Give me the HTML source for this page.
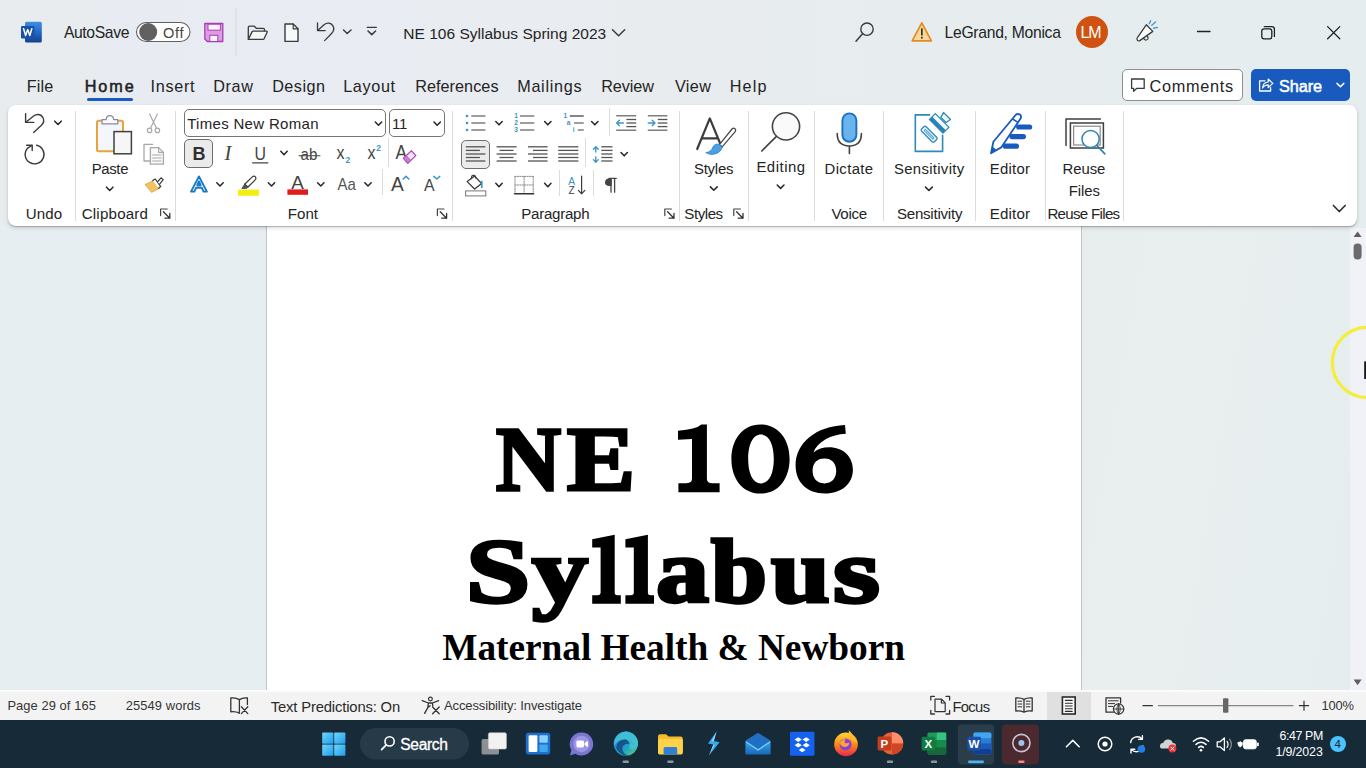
<!DOCTYPE html>
<html><head><meta charset="utf-8"><title>Word</title>
<style>
html,body{margin:0;padding:0;}
body{width:1366px;height:768px;overflow:hidden;position:relative;font-family:"Liberation Sans",sans-serif;background:#e8edf2;}
div,svg{box-sizing:border-box;}
svg{overflow:visible;}
</style></head><body>
<div style="position:absolute;left:0px;top:0px;width:1366px;height:226px;background:linear-gradient(90deg,#e8ecee 0%,#e8ecee 6.5%,#e8ebf2 8%,#e9ecf1 38%,#e8ecee 50%,#e5edee 100%);"></div>
<div style="position:absolute;left:0px;top:226px;width:1366px;height:464px;background:linear-gradient(100deg,#e6eef1 0%,#e6eef1 20%,#e8eeee 79%,#e9eeee 84%,#e4edef 100%);"></div>
<div style="position:absolute;left:1350px;top:228px;width:16px;height:462px;background:#f0f2f7;"></div>
<div style="position:absolute;left:266px;top:226px;width:816px;height:464px;background:#fff;border-left:1px solid #c2c2c9;border-right:1px solid #c2c2c9;"></div>
<div style="position:absolute;left:8px;top:105px;width:1349px;height:121px;background:#fff;border-radius:8px;box-shadow:0 1px 1px rgba(0,0,0,0.22),0 2px 4px rgba(0,0,0,0.14);"></div>
<div style="position:absolute;left:0px;top:690px;width:1366px;height:30px;background:#f3f3f3;border-top:2px solid #fbfbfb;"></div>
<div style="position:absolute;left:0px;top:720px;width:1366px;height:48px;background:#172a38;"></div>
<svg style="position:absolute;left:0;top:0" width="1366" height="64" viewBox="0 0 1366 64"><rect x="136.5" y="22.5" width="53.5" height="19" rx="9.5" fill="#fff" stroke="#616161" stroke-width="1.1"/><circle cx="148.2" cy="32" r="9" fill="#606060"/></svg>
<div style="position:absolute;left:63.90px;top:24.65px;font-family:'Liberation Sans',sans-serif;font-size:15.7px;line-height:1;white-space:pre;color:#242424;letter-spacing:-0.362px;">AutoSave</div>
<div style="position:absolute;left:163.11px;top:25.70px;font-family:'Liberation Sans',sans-serif;font-size:14.6px;line-height:1;white-space:pre;color:#444;letter-spacing:0.619px;">Off</div>
<div style="position:absolute;left:403.25px;top:25.75px;font-family:'Liberation Sans',sans-serif;font-size:15.5px;line-height:1;white-space:pre;color:#242424;letter-spacing:0.018px;">NE 106 Syllabus Spring 2023</div>
<div style="position:absolute;left:944.55px;top:24.65px;font-family:'Liberation Sans',sans-serif;font-size:15.7px;line-height:1;white-space:pre;color:#242424;letter-spacing:-0.285px;">LeGrand, Monica</div>
<div style="position:absolute;left:1076px;top:16px;width:32px;height:32px;background:#cf5210;border-radius:50%;"></div>
<div style="position:absolute;left:1080.59px;top:24.50px;font-family:'Liberation Sans',sans-serif;font-size:16px;line-height:1;white-space:pre;color:#fff;letter-spacing:-1.325px;">LM</div>
<div style="position:absolute;left:26.69px;top:77.90px;font-family:'Liberation Sans',sans-serif;font-size:16.2px;line-height:1;white-space:pre;color:#242424;letter-spacing:0.146px;">File</div>
<div style="position:absolute;left:84.69px;top:77.90px;font-family:'Liberation Sans',sans-serif;font-size:16.2px;line-height:1;white-space:pre;color:#1f1f1f;letter-spacing:1.938px;-webkit-text-stroke:0.55px #1f1f1f;">Home</div>
<div style="position:absolute;left:150.56px;top:77.90px;font-family:'Liberation Sans',sans-serif;font-size:16.2px;line-height:1;white-space:pre;color:#242424;letter-spacing:0.700px;">Insert</div>
<div style="position:absolute;left:213.19px;top:77.90px;font-family:'Liberation Sans',sans-serif;font-size:16.2px;line-height:1;white-space:pre;color:#242424;letter-spacing:0.646px;">Draw</div>
<div style="position:absolute;left:272.19px;top:77.90px;font-family:'Liberation Sans',sans-serif;font-size:16.2px;line-height:1;white-space:pre;color:#242424;letter-spacing:0.475px;">Design</div>
<div style="position:absolute;left:343.19px;top:77.90px;font-family:'Liberation Sans',sans-serif;font-size:16.2px;line-height:1;white-space:pre;color:#242424;letter-spacing:0.650px;">Layout</div>
<div style="position:absolute;left:415.19px;top:77.90px;font-family:'Liberation Sans',sans-serif;font-size:16.2px;line-height:1;white-space:pre;color:#242424;letter-spacing:0.056px;">References</div>
<div style="position:absolute;left:517.19px;top:77.90px;font-family:'Liberation Sans',sans-serif;font-size:16.2px;line-height:1;white-space:pre;color:#242424;letter-spacing:0.705px;">Mailings</div>
<div style="position:absolute;left:601.19px;top:77.90px;font-family:'Liberation Sans',sans-serif;font-size:16.2px;line-height:1;white-space:pre;color:#242424;letter-spacing:-0.075px;">Review</div>
<div style="position:absolute;left:674.94px;top:77.90px;font-family:'Liberation Sans',sans-serif;font-size:16.2px;line-height:1;white-space:pre;color:#242424;letter-spacing:0.396px;">View</div>
<div style="position:absolute;left:729.69px;top:77.90px;font-family:'Liberation Sans',sans-serif;font-size:16.2px;line-height:1;white-space:pre;color:#242424;letter-spacing:1.208px;">Help</div>
<div style="position:absolute;left:87px;top:98px;width:46px;height:2.8px;background:#185abd;border-radius:1.5px;"></div>
<div style="position:absolute;left:1122px;top:69px;width:121px;height:32px;background:#fff;border:1px solid #8f8f8f;border-radius:5px;"></div>
<div style="position:absolute;left:1149.59px;top:77.85px;font-family:'Liberation Sans',sans-serif;font-size:16.3px;line-height:1;white-space:pre;color:#242424;letter-spacing:0.695px;">Comments</div>
<div style="position:absolute;left:1251px;top:69px;width:99px;height:32px;background:#185abd;border-radius:5px;"></div>
<div style="position:absolute;left:1278.91px;top:77.85px;font-family:'Liberation Sans',sans-serif;font-size:16.3px;line-height:1;white-space:pre;color:#fff;letter-spacing:-0.081px;-webkit-text-stroke:0.5px #fff;">Share</div>
<div style="position:absolute;left:25.68px;top:205.95px;font-family:'Liberation Sans',sans-serif;font-size:15.1px;line-height:1;white-space:pre;color:#242424;letter-spacing:0.142px;">Undo</div>
<div style="position:absolute;left:81.65px;top:205.95px;font-family:'Liberation Sans',sans-serif;font-size:15.1px;line-height:1;white-space:pre;color:#242424;letter-spacing:0.220px;">Clipboard</div>
<div style="position:absolute;left:287.81px;top:205.95px;font-family:'Liberation Sans',sans-serif;font-size:15.1px;line-height:1;white-space:pre;color:#242424;letter-spacing:0.021px;">Font</div>
<div style="position:absolute;left:521.21px;top:205.95px;font-family:'Liberation Sans',sans-serif;font-size:15.1px;line-height:1;white-space:pre;color:#242424;letter-spacing:-0.259px;">Paragraph</div>
<div style="position:absolute;left:684.31px;top:205.95px;font-family:'Liberation Sans',sans-serif;font-size:15.1px;line-height:1;white-space:pre;color:#242424;letter-spacing:-0.447px;">Styles</div>
<div style="position:absolute;left:831.44px;top:205.95px;font-family:'Liberation Sans',sans-serif;font-size:15.1px;line-height:1;white-space:pre;color:#242424;letter-spacing:-0.312px;">Voice</div>
<div style="position:absolute;left:896.91px;top:205.95px;font-family:'Liberation Sans',sans-serif;font-size:15.1px;line-height:1;white-space:pre;color:#242424;letter-spacing:-0.241px;">Sensitivity</div>
<div style="position:absolute;left:989.81px;top:205.95px;font-family:'Liberation Sans',sans-serif;font-size:15.1px;line-height:1;white-space:pre;color:#242424;letter-spacing:0.147px;">Editor</div>
<div style="position:absolute;left:1047.41px;top:205.95px;font-family:'Liberation Sans',sans-serif;font-size:15.1px;line-height:1;white-space:pre;color:#242424;letter-spacing:-0.696px;">Reuse Files</div>
<div style="position:absolute;left:91.71px;top:161.55px;font-family:'Liberation Sans',sans-serif;font-size:14.9px;line-height:1;white-space:pre;color:#242424;letter-spacing:-0.338px;">Paste</div>
<div style="position:absolute;left:693.98px;top:161.55px;font-family:'Liberation Sans',sans-serif;font-size:14.9px;line-height:1;white-space:pre;color:#242424;letter-spacing:-0.208px;">Styles</div>
<div style="position:absolute;left:756.41px;top:159.55px;font-family:'Liberation Sans',sans-serif;font-size:14.9px;line-height:1;white-space:pre;color:#242424;letter-spacing:0.527px;">Editing</div>
<div style="position:absolute;left:824.51px;top:161.55px;font-family:'Liberation Sans',sans-serif;font-size:14.9px;line-height:1;white-space:pre;color:#242424;letter-spacing:0.383px;">Dictate</div>
<div style="position:absolute;left:893.98px;top:161.55px;font-family:'Liberation Sans',sans-serif;font-size:14.9px;line-height:1;white-space:pre;color:#242424;letter-spacing:0.316px;">Sensitivity</div>
<div style="position:absolute;left:989.81px;top:161.55px;font-family:'Liberation Sans',sans-serif;font-size:14.9px;line-height:1;white-space:pre;color:#242424;letter-spacing:0.260px;">Editor</div>
<div style="position:absolute;left:1062.51px;top:161.55px;font-family:'Liberation Sans',sans-serif;font-size:14.9px;line-height:1;white-space:pre;color:#242424;letter-spacing:-0.038px;">Reuse</div>
<div style="position:absolute;left:1068.81px;top:183.55px;font-family:'Liberation Sans',sans-serif;font-size:14.9px;line-height:1;white-space:pre;color:#242424;letter-spacing:-0.062px;">Files</div>
<div style="position:absolute;left:75px;top:111px;width:1px;height:110px;background:#dcdcdc;"></div>
<div style="position:absolute;left:175px;top:111px;width:1px;height:110px;background:#dcdcdc;"></div>
<div style="position:absolute;left:452px;top:111px;width:1px;height:110px;background:#dcdcdc;"></div>
<div style="position:absolute;left:679px;top:111px;width:1px;height:110px;background:#dcdcdc;"></div>
<div style="position:absolute;left:748px;top:111px;width:1px;height:110px;background:#dcdcdc;"></div>
<div style="position:absolute;left:814px;top:111px;width:1px;height:110px;background:#dcdcdc;"></div>
<div style="position:absolute;left:883px;top:111px;width:1px;height:110px;background:#dcdcdc;"></div>
<div style="position:absolute;left:975px;top:111px;width:1px;height:110px;background:#dcdcdc;"></div>
<div style="position:absolute;left:1045px;top:111px;width:1px;height:110px;background:#dcdcdc;"></div>
<div style="position:absolute;left:1123px;top:111px;width:1px;height:110px;background:#dcdcdc;"></div>
<div style="position:absolute;left:184px;top:109px;width:202px;height:28px;background:#fff;border:1px solid #757575;border-radius:5px;"></div>
<div style="position:absolute;left:187.19px;top:116.00px;font-family:'Liberation Sans',sans-serif;font-size:15px;line-height:1;white-space:pre;color:#242424;letter-spacing:0.308px;">Times New Roman</div>
<div style="position:absolute;left:389px;top:109px;width:56px;height:28px;background:#fff;border:1px solid #757575;border-radius:5px;"></div>
<div style="position:absolute;left:184px;top:139px;width:29px;height:29px;background:#ebebeb;border:1px solid #6e6e6e;border-radius:5px;"></div>
<div style="position:absolute;left:461px;top:140px;width:29px;height:29px;background:#ebebeb;border:1px solid #6e6e6e;border-radius:5px;"></div>
<div style="position:absolute;left:391.88px;top:116.00px;font-family:'Liberation Sans',sans-serif;font-size:15px;line-height:1;white-space:pre;color:#242424;letter-spacing:0.000px;">11</div>
<div style="position:absolute;left:7.40px;top:700.05px;font-family:'Liberation Sans',sans-serif;font-size:12.9px;line-height:1;white-space:pre;color:#333;letter-spacing:0.074px;">Page 29 of 165</div>
<div style="position:absolute;left:125.78px;top:700.05px;font-family:'Liberation Sans',sans-serif;font-size:12.9px;line-height:1;white-space:pre;color:#333;letter-spacing:0.099px;">25549 words</div>
<div style="position:absolute;left:270.69px;top:699.60px;font-family:'Liberation Sans',sans-serif;font-size:14.8px;line-height:1;white-space:pre;color:#2a2a2a;letter-spacing:-0.152px;">Text Predictions: On</div>
<div style="position:absolute;left:444.00px;top:699.00px;font-family:'Liberation Sans',sans-serif;font-size:13px;line-height:1;white-space:pre;color:#333;letter-spacing:-0.115px;">Accessibility: Investigate</div>
<div style="position:absolute;left:1047px;top:692px;width:44px;height:28px;background:#e0e0e0;"></div>
<div style="position:absolute;left:952.41px;top:699.60px;font-family:'Liberation Sans',sans-serif;font-size:14.8px;line-height:1;white-space:pre;color:#2a2a2a;letter-spacing:-0.666px;">Focus</div>
<div style="position:absolute;left:1321.56px;top:700.05px;font-family:'Liberation Sans',sans-serif;font-size:12.9px;line-height:1;white-space:pre;color:#333;letter-spacing:-0.154px;">100%</div>
<div style="position:absolute;left:496.15px;top:413.05px;font-family:'Liberation Serif',serif;font-weight:700;font-size:92px;line-height:1;white-space:pre;color:#000;paint-order:stroke fill;stroke-linejoin:round;-webkit-text-stroke:3.4px #000;transform-origin:0 0;transform:scaleX(0.9761);">N</div>
<div style="position:absolute;left:567.35px;top:413.05px;font-family:'Liberation Serif',serif;font-weight:700;font-size:92px;line-height:1;white-space:pre;color:#000;paint-order:stroke fill;stroke-linejoin:round;-webkit-text-stroke:3.4px #000;transform-origin:0 0;transform:scaleX(1.1072);">E</div>
<svg style="position:absolute;left:0;top:0" width="1366" height="768" viewBox="0 0 1366 768"><path d="M706.9 424.6 V479 Q707 483.2 712.4 483.2 H719.6 V492.2 H678.4 V483.2 H686.4 Q692 483.2 692 478.6 V439 L678 439.8 V430.8 Q696 429.6 701.4 424.6 Z" fill="#000"/><path fill-rule="evenodd" d="M760.5 424.4 C779 424.4 789.6 440 789.6 459 C789.6 478 779 493.6 760.5 493.6 C742 493.6 731.4 478 731.4 459 C731.4 440 742 424.4 760.5 424.4 Z M761 434.6 C752.6 434.6 748.2 445 748.2 459 C748.2 473 752.6 483.4 761 483.4 C769.4 483.4 773.8 473 773.8 459 C773.8 445 769.4 434.6 761 434.6 Z" fill="#000"/><path fill-rule="evenodd" d="M845 425 L845.8 433.8 C831 434.4 817.6 441.6 813.4 452.6 C817.6 449 823 447.2 829 447.2 C843 447.2 852.9 456.4 852.9 469.8 C852.9 483.8 841.4 493.6 825 493.6 C807 493.6 795.6 482.4 795.6 465.6 C795.6 442.8 816 426.2 845 425 Z M824.4 458.4 C816.8 458.4 812.6 463.2 812.6 470.8 C812.6 478.4 817 483.4 824.4 483.4 C831.8 483.4 836.2 478.4 836.2 470.8 C836.2 463.2 831.8 458.4 824.4 458.4 Z" fill="#000"/></svg>
<div style="position:absolute;left:466.22px;top:525.05px;font-family:'Liberation Serif',serif;font-weight:700;font-size:92px;line-height:1;white-space:pre;color:#000;paint-order:stroke fill;stroke-linejoin:round;-webkit-text-stroke:3.4px #000;transform-origin:0 0;transform:scaleX(1.2544);">S</div>
<div style="position:absolute;left:532.20px;top:525.05px;font-family:'Liberation Serif',serif;font-weight:700;font-size:92px;line-height:1;white-space:pre;color:#000;paint-order:stroke fill;stroke-linejoin:round;-webkit-text-stroke:3.4px #000;transform-origin:0 0;transform:scaleX(1.2172);">y</div>
<div style="position:absolute;left:655.58px;top:525.05px;font-family:'Liberation Serif',serif;font-weight:700;font-size:92px;line-height:1;white-space:pre;color:#000;paint-order:stroke fill;stroke-linejoin:round;-webkit-text-stroke:3.4px #000;transform-origin:0 0;transform:scaleX(1.1511);">a</div>
<div style="position:absolute;left:711.23px;top:525.05px;font-family:'Liberation Serif',serif;font-weight:700;font-size:92px;line-height:1;white-space:pre;color:#000;paint-order:stroke fill;stroke-linejoin:round;-webkit-text-stroke:3.4px #000;transform-origin:0 0;transform:scaleX(1.0963);">b</div>
<div style="position:absolute;left:771.27px;top:525.05px;font-family:'Liberation Serif',serif;font-weight:700;font-size:92px;line-height:1;white-space:pre;color:#000;paint-order:stroke fill;stroke-linejoin:round;-webkit-text-stroke:3.4px #000;transform-origin:0 0;transform:scaleX(1.1502);">u</div>
<div style="position:absolute;left:833.13px;top:525.05px;font-family:'Liberation Serif',serif;font-weight:700;font-size:92px;line-height:1;white-space:pre;color:#000;paint-order:stroke fill;stroke-linejoin:round;-webkit-text-stroke:3.4px #000;transform-origin:0 0;transform:scaleX(1.3095);">s</div>
<svg style="position:absolute;left:0;top:0" width="1366" height="768" viewBox="0 0 1366 768"><path d="M614.7 534.7 V592.8 Q614.7 595.3 617.6 595.3 H620.8 V603.8 H592.2 V595.3 H597.6 Q600.6 595.3 600.6 592.6 V547.6 H592.2 V539.2 Z" fill="#000"/><path d="M647.9000000000001 534.7 V592.8 Q647.9000000000001 595.3 650.8000000000001 595.3 H654.0 V603.8 H625.4000000000001 V595.3 H630.8000000000001 Q633.8000000000001 595.3 633.8000000000001 592.6 V547.6 H625.4000000000001 V539.2 Z" fill="#000"/></svg>
<div style="position:absolute;left:442.18px;top:628.84px;font-family:'Liberation Serif',serif;font-size:37.33px;line-height:1;white-space:pre;color:#000;letter-spacing:-0.023px;font-weight:700;">Maternal Health &amp; Newborn</div>
<svg style="position:absolute;left:0;top:0" width="1366" height="768" viewBox="0 0 1366 768"><defs><linearGradient id="wg" x1="0" y1="0" x2="0" y2="1"><stop offset="0" stop-color="#3f8fe0"/><stop offset="0.5" stop-color="#2368c4"/><stop offset="1" stop-color="#123f91"/></linearGradient></defs><rect x="25" y="21.8" width="16.8" height="20.8" rx="1.5" fill="url(#wg)"/><rect x="21" y="26" width="13.4" height="12.4" rx="1.2" fill="#1a50a8"/><path d="M23.6 28.8 L25.6 35.6 L27.7 29.6 L29.8 35.6 L31.8 28.8" fill="none" stroke="#fff" stroke-width="1.5" stroke-linecap="round" stroke-linejoin="round" /><path d="M204.8 23.5 H222.8 V41.5 H207.3 L204.8 39 Z" fill="#dd9be0" stroke="#a93db3" stroke-width="1.3" stroke-linejoin="round"/><rect x="208" y="24.2" width="12.3" height="6" fill="#fdf3fd" stroke="#a93db3" stroke-width="1"/><rect x="209.8" y="35.3" width="8" height="6.2" fill="#fdf3fd" stroke="#a93db3" stroke-width="1"/><rect x="235.5" y="8" width="1" height="48" fill="#d3d7dc"/><path d="M248.3 39.3 V27.5 Q248.3 26.2 249.6 26.2 H254.3 L256.3 28.3 H263.3 Q264.5 28.3 264.5 29.6 V31.2" fill="none" stroke="#3b3b3b" stroke-width="1.3" stroke-linecap="round" stroke-linejoin="round" /><path d="M248.4 39.4 L252 31.9 Q252.4 31.2 253.3 31.2 H266.4 Q267.6 31.2 267.1 32.3 L264.2 38.6 Q263.8 39.4 263 39.4 Z" fill="#f5f7f4" stroke="#3b3b3b" stroke-width="1.3" stroke-linecap="round" stroke-linejoin="round" /><path d="M285 24 H293.2 L298 28.8 V41.4 H285 Z" fill="#f7f9fc" stroke="#3b3b3b" stroke-width="1.4" stroke-linecap="round" stroke-linejoin="round" /><path d="M293.2 24 V28.8 H298" fill="none" stroke="#3b3b3b" stroke-width="1.2" stroke-linecap="round" stroke-linejoin="round" /><path d="M317.5 23 V30.6 H325.2" fill="none" stroke="#3b3b3b" stroke-width="1.3" stroke-linecap="round" stroke-linejoin="round" /><path d="M317.7 30.4 L324.3 24.6 C327.2 22.2 331 22.6 332.8 25.6 C334.7 28.8 333.3 31.8 331.3 33.8 L324.6 40.6" fill="none" stroke="#3b3b3b" stroke-width="1.3" stroke-linecap="round" stroke-linejoin="round" /><path d="M343.5 30 L347.2 33.5 L351 30" fill="none" stroke="#3b3b3b" stroke-width="1.5" stroke-linecap="round" stroke-linejoin="round" /><path d="M367.2 27.3 H376.4" fill="none" stroke="#3b3b3b" stroke-width="1.3" stroke-linecap="round" stroke-linejoin="round" /><path d="M368 31 L371.8 34.6 L375.6 31" fill="none" stroke="#3b3b3b" stroke-width="1.5" stroke-linecap="round" stroke-linejoin="round" /><path d="M612.5 29.8 L618.6 35.8 L624.7 29.8" fill="none" stroke="#3b3b3b" stroke-width="1.5" stroke-linecap="round" stroke-linejoin="round" /><circle cx="867" cy="29.2" r="6.2" fill="none" stroke="#3b3b3b" stroke-width="1.4"/><path d="M862.6 33.8 L856 41.2" fill="none" stroke="#3b3b3b" stroke-width="1.5" stroke-linecap="round" stroke-linejoin="round" /><path d="M921.8 22.8 L931.4 40.8 H912.2 Z" fill="#fbd79c" stroke="#e58a1f" stroke-width="1.7" stroke-linejoin="round"/><rect x="921" y="28.3" width="1.7" height="7.2" fill="#2c3a1e"/><rect x="921" y="36.8" width="1.7" height="1.8" fill="#2c3a1e"/><path d="M1146.3 24.8 L1152.8 31.4 L1139.8 40.6 Q1138.2 41.4 1137.3 40 Q1136.5 38.8 1137.4 37.6 Z" fill="#fbfcfd" stroke="#3b3b3b" stroke-width="1.3" stroke-linecap="round" stroke-linejoin="round" /><path d="M1143.6 38.2 Q1145.3 41.2 1147.6 39.4 Q1148.6 38.2 1147.6 36.2" fill="none" stroke="#3b3b3b" stroke-width="1.2" stroke-linecap="round" stroke-linejoin="round" /><path d="M1149.3 23.6 L1150.7 20.8 M1151.8 25.2 L1155.6 22 M1153.6 28.2 L1157.4 27.4" fill="none" stroke="#3f9bd8" stroke-width="1.4" stroke-linecap="round" stroke-linejoin="round" /><path d="M1197.5 31.5 H1210" fill="none" stroke="#222" stroke-width="1.3" stroke-linecap="round" stroke-linejoin="round" /><rect x="1261.8" y="28.8" width="10" height="10" rx="2.2" fill="none" stroke="#222" stroke-width="1.3"/><path d="M1264.3 26.6 H1271.8 Q1274.4 26.6 1274.4 29.2 V36.4" fill="none" stroke="#222" stroke-width="1.3" stroke-linecap="round" stroke-linejoin="round" /><path d="M1327.6 26.6 L1339.8 38.8 M1339.8 26.6 L1327.6 38.8" fill="none" stroke="#222" stroke-width="1.3" stroke-linecap="round" stroke-linejoin="round" /><path d="M1131.6 79 H1144.2 V88.4 H1136.6 L1133.6 91.2 V88.4 H1131.6 Z" fill="none" stroke="#3b3b3b" stroke-width="1.3" stroke-linecap="round" stroke-linejoin="round" /><path d="M1265 80.8 H1259.6 V91 H1270.6 V87.6" fill="none" stroke="#fff" stroke-width="1.3" stroke-linecap="round" stroke-linejoin="round" /><path d="M1262.6 88 C1262.8 84 1265 82.2 1268.2 82 V79 L1272.8 83.4 L1268.2 87.6 V84.8 C1265.6 84.8 1263.8 85.8 1262.6 88 Z" fill="none" stroke="#fff" stroke-width="1.2" stroke-linecap="round" stroke-linejoin="round" /><path d="M1337 83.4 L1340.4 86.8 L1343.8 83.4" fill="none" stroke="#fff" stroke-width="1.5" stroke-linecap="round" stroke-linejoin="round" /></svg>
<svg style="position:absolute;left:0;top:0" width="1366" height="768" viewBox="0 0 1366 768"><path d="M25.6 113.6 V122.4 H33.8" fill="none" stroke="#3b3b3b" stroke-width="1.4" stroke-linecap="round" stroke-linejoin="round" /><path d="M25.8 122.2 L33.6 116 C36.6 113.6 40.6 114 42.6 117 C44.6 120.2 43.4 123.4 41.2 125.4 L33.6 132.4" fill="none" stroke="#3b3b3b" stroke-width="1.4" stroke-linecap="round" stroke-linejoin="round" /><path d="M54.80 121.15 L58.00 124.45 L61.20 121.15" fill="none" stroke="#262626" stroke-width="1.5" stroke-linecap="round" stroke-linejoin="round" /><path d="M36.6 145.3 A9.4 9.4 0 1 1 27.6 148.2 L32 145.5" fill="none" stroke="#3b3b3b" stroke-width="1.4" stroke-linecap="round" stroke-linejoin="round" /><path d="M26.6 145.3 H32.2 V150.6" fill="none" stroke="#3b3b3b" stroke-width="1.4" stroke-linecap="round" stroke-linejoin="round" /><rect x="97" y="120.8" width="26" height="30.4" rx="1.5" fill="#f3f6fa" stroke="#e8a43c" stroke-width="2"/><path d="M102 123.8 V119.6 H106.2 C106.2 114.2 113.6 114.2 113.6 119.6 H117.8 V123.8 Z" fill="#fbfbfd" stroke="#8a84a8" stroke-width="1.2" stroke-linejoin="round"/><rect x="114" y="131.6" width="17.4" height="22.2" fill="#f6f6f6" stroke="#404040" stroke-width="1.5"/><path d="M106.50 187.15 L109.70 190.45 L112.90 187.15" fill="none" stroke="#262626" stroke-width="1.5" stroke-linecap="round" stroke-linejoin="round" /><path d="M149.6 114 L156.4 128 M157.4 114 L150.6 128" fill="none" stroke="#a8a8a8" stroke-width="1.2" stroke-linecap="round" stroke-linejoin="round" /><circle cx="149.6" cy="130.4" r="2.2" fill="none" stroke="#a8a8a8" stroke-width="1.2"/><circle cx="157.4" cy="130.4" r="2.2" fill="none" stroke="#a8a8a8" stroke-width="1.2"/><path d="M150 161 H144 V144.4 H152.6" fill="none" stroke="#a8a8a8" stroke-width="1.3" stroke-linecap="round" stroke-linejoin="round" /><path d="M150.4 147.6 H158.6 L163.4 152.4 V164.2 H150.4 Z" fill="#fafafa" stroke="#a8a8a8" stroke-width="1.3" stroke-linecap="round" stroke-linejoin="round" /><path d="M158.6 147.6 V152.4 H163.4" fill="none" stroke="#a8a8a8" stroke-width="1.1" stroke-linecap="round" stroke-linejoin="round" /><path d="M152.6 155 H161.2 M152.6 158 H161.2 M152.6 161 H161.2" fill="none" stroke="#a8a8a8" stroke-width="1" stroke-linecap="round" stroke-linejoin="round" /><path d="M145 184.6 L153.6 180.4 L159.4 188.4 L151.6 192.4 Z" fill="#f0c463" stroke="#d9a542" stroke-width="0.8" stroke-linejoin="round"/><path d="M152.8 180.6 L155.2 179 L160.8 186.6 L158.6 188.2" fill="#fff" stroke="#3b3b3b" stroke-width="1.2" stroke-linecap="round" stroke-linejoin="round" /><path d="M157.4 182 L161 177.8 L163.2 179.6 L159.6 184.2" fill="#fff" stroke="#3b3b3b" stroke-width="1.2" stroke-linecap="round" stroke-linejoin="round" /><path d="M160.6 215.6 V209 H167.2" fill="none" stroke="#444" stroke-width="1.2" stroke-linecap="round" stroke-linejoin="round" /><path d="M163.4 211.8 L169.79999999999998 218.2 M165.0 218.2 H169.79999999999998 V213.4" fill="none" stroke="#333" stroke-width="1.3" stroke-linecap="round" stroke-linejoin="round" /><path d="M437.4 215.6 V209 H444.0" fill="none" stroke="#444" stroke-width="1.2" stroke-linecap="round" stroke-linejoin="round" /><path d="M440.2 211.8 L446.59999999999997 218.2 M441.79999999999995 218.2 H446.59999999999997 V213.4" fill="none" stroke="#333" stroke-width="1.3" stroke-linecap="round" stroke-linejoin="round" /><path d="M664.8 215.6 V209 H671.4" fill="none" stroke="#444" stroke-width="1.2" stroke-linecap="round" stroke-linejoin="round" /><path d="M667.5999999999999 211.8 L674.0 218.2 M669.1999999999999 218.2 H674.0 V213.4" fill="none" stroke="#333" stroke-width="1.3" stroke-linecap="round" stroke-linejoin="round" /><path d="M733.8 215.6 V209 H740.4" fill="none" stroke="#444" stroke-width="1.2" stroke-linecap="round" stroke-linejoin="round" /><path d="M736.5999999999999 211.8 L743.0 218.2 M738.1999999999999 218.2 H743.0 V213.4" fill="none" stroke="#333" stroke-width="1.3" stroke-linecap="round" stroke-linejoin="round" /><path d="M375.30 121.95 L378.50 125.25 L381.70 121.95" fill="none" stroke="#262626" stroke-width="1.5" stroke-linecap="round" stroke-linejoin="round" /><path d="M434.00 121.95 L437.20 125.25 L440.40 121.95" fill="none" stroke="#262626" stroke-width="1.5" stroke-linecap="round" stroke-linejoin="round" /><text x="192.6" y="160" font-family="'Liberation Sans',sans-serif" font-size="18" font-weight="700" fill="#303030"  >B</text><text x="224.6" y="160.3" font-family="'Liberation Serif',serif" font-size="20.5" font-weight="400" fill="#444" font-style='italic' >I</text><text x="254.6" y="159.7" font-family="'Liberation Sans',sans-serif" font-size="18.5" font-weight="400" fill="#444"  textLength="11.5" lengthAdjust="spacingAndGlyphs">U</text><path d="M252.6 162.8 H267.8" fill="none" stroke="#444" stroke-width="1.2" stroke-linecap="round" stroke-linejoin="round" /><path d="M280.80 151.35 L284.00 154.65 L287.20 151.35" fill="none" stroke="#262626" stroke-width="1.5" stroke-linecap="round" stroke-linejoin="round" /><text x="300.6" y="159.6" font-family="'Liberation Sans',sans-serif" font-size="16" font-weight="400" fill="#444"  textLength="16.8" lengthAdjust="spacingAndGlyphs">ab</text><path d="M299 155.8 H320" fill="none" stroke="#444" stroke-width="1.1" stroke-linecap="round" stroke-linejoin="round" /><text x="336.6" y="158.7" font-family="'Liberation Sans',sans-serif" font-size="17.5" font-weight="400" fill="#444"  textLength="8" lengthAdjust="spacingAndGlyphs">x</text><text x="345.4" y="163" font-family="'Liberation Sans',sans-serif" font-size="8.5" font-weight="700" fill="#3a96c7"  >2</text><text x="367.4" y="158.7" font-family="'Liberation Sans',sans-serif" font-size="17.5" font-weight="400" fill="#444"  textLength="8" lengthAdjust="spacingAndGlyphs">x</text><text x="376.2" y="150.6" font-family="'Liberation Sans',sans-serif" font-size="8.5" font-weight="700" fill="#3a96c7"  >2</text><rect x="388" y="138" width="1" height="29" fill="#dcdcdc"/><text x="395.6" y="158.6" font-family="'Liberation Sans',sans-serif" font-size="20" font-weight="400" fill="#444"  textLength="11.4" lengthAdjust="spacingAndGlyphs">A</text><path d="M403.4 158.2 L411.4 150.8 L415.8 155.6 L407.8 163.2 Z" fill="#f3e3f6" stroke="#b14fbd" stroke-width="1.3" stroke-linejoin="round"/><path d="M403.4 158.2 L406.2 155.6 L410.6 160.4 L407.8 163.2 Z" fill="#c77fd0" stroke="#b14fbd" stroke-width="1" stroke-linejoin="round"/><path d="M191 191.6 L198.95 176.4 L206.9 191.6 H203.6 L201.8 187.8 H196.1 L194.3 191.6 Z M197.3 185.2 H200.6 L198.95 181.4 Z" fill="#e4f3fd" stroke="#1878c4" stroke-width="1.9" stroke-linejoin="round" fill-rule="evenodd"/><path d="M216.80 182.75 L220.00 186.05 L223.20 182.75" fill="none" stroke="#262626" stroke-width="1.5" stroke-linecap="round" stroke-linejoin="round" /><path d="M252.6 176.6 Q254.6 175.4 255.6 177.2 Q256.4 178.6 255.2 179.8 L248 187 L244.6 184.2 Z" fill="#fff" stroke="#3b3b3b" stroke-width="1.2" stroke-linecap="round" stroke-linejoin="round" /><path d="M244.6 184.2 L248 187 L246.6 188.6 H241.8 Z" fill="#555" stroke="#444" stroke-width="0.8" stroke-linejoin="round"/><rect x="238" y="189.6" width="21" height="6.2" fill="#f5ee14"/><path d="M268.30 182.75 L271.50 186.05 L274.70 182.75" fill="none" stroke="#262626" stroke-width="1.5" stroke-linecap="round" stroke-linejoin="round" /><text x="291.2" y="188.6" font-family="'Liberation Sans',sans-serif" font-size="19" font-weight="400" fill="#444"  textLength="12.6" lengthAdjust="spacingAndGlyphs">A</text><rect x="287.4" y="189.4" width="20.6" height="5.4" fill="#e21b1b"/><path d="M317.60 182.75 L320.80 186.05 L324.00 182.75" fill="none" stroke="#262626" stroke-width="1.5" stroke-linecap="round" stroke-linejoin="round" /><text x="337.6" y="189.7" font-family="'Liberation Sans',sans-serif" font-size="16.2" font-weight="400" fill="#555"  textLength="18.4" lengthAdjust="spacingAndGlyphs">Aa</text><path d="M364.80 182.75 L368.00 186.05 L371.20 182.75" fill="none" stroke="#262626" stroke-width="1.5" stroke-linecap="round" stroke-linejoin="round" /><rect x="382" y="169" width="1" height="26" fill="#dcdcdc"/><text x="391" y="191" font-family="'Liberation Sans',sans-serif" font-size="20" font-weight="400" fill="#444"  textLength="12.8" lengthAdjust="spacingAndGlyphs">A</text><path d="M403.2 179 L406 176.4 L408.8 179" fill="none" stroke="#3a96c7" stroke-width="1.5" stroke-linecap="round" stroke-linejoin="round" /><text x="424" y="191" font-family="'Liberation Sans',sans-serif" font-size="16.5" font-weight="400" fill="#444"  textLength="10.6" lengthAdjust="spacingAndGlyphs">A</text><path d="M433.8 176.4 L436.8 179 L439.8 176.4" fill="none" stroke="#3a96c7" stroke-width="1.5" stroke-linecap="round" stroke-linejoin="round" /></svg>
<svg style="position:absolute;left:0;top:0" width="1366" height="768" viewBox="0 0 1366 768"><circle cx="467" cy="116" r="1.3" fill="#3a96c7"/><rect x="471.3" y="115.35" width="14.10" height="1.3" fill="#6a6a6a"/><circle cx="467" cy="123" r="1.3" fill="#3a96c7"/><rect x="471.3" y="122.35" width="14.10" height="1.3" fill="#6a6a6a"/><circle cx="467" cy="130" r="1.3" fill="#3a96c7"/><rect x="471.3" y="129.35" width="14.10" height="1.3" fill="#6a6a6a"/><path d="M495.80 121.55 L499.00 124.85 L502.20 121.55" fill="none" stroke="#262626" stroke-width="1.5" stroke-linecap="round" stroke-linejoin="round" /><text x="514.2" y="118.4" font-family="'Liberation Sans',sans-serif" font-size="6.6" font-weight="700" fill="#3a96c7"  >1</text><rect x="520" y="115.35" width="14.30" height="1.3" fill="#6a6a6a"/><text x="514.2" y="125.4" font-family="'Liberation Sans',sans-serif" font-size="6.6" font-weight="700" fill="#3a96c7"  >2</text><rect x="520" y="122.35" width="14.30" height="1.3" fill="#6a6a6a"/><text x="514.2" y="132.4" font-family="'Liberation Sans',sans-serif" font-size="6.6" font-weight="700" fill="#3a96c7"  >3</text><rect x="520" y="129.35" width="14.30" height="1.3" fill="#6a6a6a"/><path d="M544.60 121.55 L547.80 124.85 L551.00 121.55" fill="none" stroke="#262626" stroke-width="1.5" stroke-linecap="round" stroke-linejoin="round" /><text x="563.4" y="118.4" font-family="'Liberation Sans',sans-serif" font-size="6.6" font-weight="700" fill="#3a96c7"  >1</text><rect x="569.8" y="115.35" width="13.90" height="1.3" fill="#444"/><text x="566.8" y="125.4" font-family="'Liberation Sans',sans-serif" font-size="6.6" font-weight="700" fill="#3a96c7"  >a</text><rect x="574" y="122.35" width="9.70" height="1.3" fill="#6a6a6a"/><text x="572.8" y="132.4" font-family="'Liberation Sans',sans-serif" font-size="6.6" font-weight="700" fill="#3a96c7"  >i</text><rect x="577.8" y="129.35" width="5.90" height="1.3" fill="#6a6a6a"/><path d="M591.60 121.55 L594.80 124.85 L598.00 121.55" fill="none" stroke="#262626" stroke-width="1.5" stroke-linecap="round" stroke-linejoin="round" /><rect x="609" y="108" width="1" height="28" fill="#dcdcdc"/><rect x="616.2" y="115.15" width="20.00" height="1.3" fill="#6a6a6a"/><rect x="616.2" y="129.55" width="20.00" height="1.3" fill="#6a6a6a"/><rect x="626.4" y="118.85" width="9.80" height="1.3" fill="#555"/><rect x="626.4" y="122.35" width="9.80" height="1.3" fill="#555"/><rect x="626.4" y="125.95" width="9.80" height="1.3" fill="#555"/><path d="M616.6 123 H623.4000000000001 M619.4000000000001 120.2 L616.6 123 L619.4000000000001 125.8" fill="none" stroke="#3a96c7" stroke-width="1.3" stroke-linecap="round" stroke-linejoin="round" /><rect x="647.8" y="115.15" width="19.60" height="1.3" fill="#6a6a6a"/><rect x="647.8" y="129.55" width="19.60" height="1.3" fill="#6a6a6a"/><rect x="657.8" y="118.85" width="9.60" height="1.3" fill="#555"/><rect x="657.8" y="122.35" width="9.60" height="1.3" fill="#555"/><rect x="657.8" y="125.95" width="9.60" height="1.3" fill="#555"/><path d="M648.1999999999999 123 H655.0 M652.1999999999999 120.2 L655.0 123 L652.1999999999999 125.8" fill="none" stroke="#3a96c7" stroke-width="1.3" stroke-linecap="round" stroke-linejoin="round" /><rect x="465.8" y="146.15" width="19.60" height="1.3" fill="#555"/><rect x="496.6" y="146.15" width="20.00" height="1.3" fill="#555"/><rect x="528" y="146.15" width="19.60" height="1.3" fill="#555"/><rect x="558.2" y="146.15" width="20.20" height="1.3" fill="#555"/><rect x="601.3" y="146.15" width="11.20" height="1.3" fill="#555"/><rect x="465.8" y="149.75" width="14.10" height="1.3" fill="#555"/><rect x="499.5" y="149.75" width="14.00" height="1.3" fill="#555"/><rect x="533" y="149.75" width="14.60" height="1.3" fill="#555"/><rect x="558.2" y="149.75" width="20.20" height="1.3" fill="#555"/><rect x="601.3" y="149.75" width="11.20" height="1.3" fill="#555"/><rect x="465.8" y="153.35" width="19.60" height="1.3" fill="#555"/><rect x="496.6" y="153.35" width="20.00" height="1.3" fill="#555"/><rect x="528" y="153.35" width="19.60" height="1.3" fill="#555"/><rect x="558.2" y="153.35" width="20.20" height="1.3" fill="#555"/><rect x="601.3" y="153.35" width="11.20" height="1.3" fill="#555"/><rect x="465.8" y="156.85" width="14.10" height="1.3" fill="#555"/><rect x="499.5" y="156.85" width="14.00" height="1.3" fill="#555"/><rect x="533" y="156.85" width="14.60" height="1.3" fill="#555"/><rect x="558.2" y="156.85" width="20.20" height="1.3" fill="#555"/><rect x="601.3" y="156.85" width="11.20" height="1.3" fill="#555"/><rect x="465.8" y="160.35" width="19.60" height="1.3" fill="#555"/><rect x="496.6" y="160.35" width="20.00" height="1.3" fill="#555"/><rect x="528" y="160.35" width="19.60" height="1.3" fill="#555"/><rect x="558.2" y="160.35" width="20.20" height="1.3" fill="#555"/><rect x="601.3" y="160.35" width="11.20" height="1.3" fill="#555"/><rect x="585" y="138" width="1" height="29" fill="#dcdcdc"/><path d="M595.8 146.8 V152 M593.4 149.2 L595.8 146.6 L598.2 149.2 M595.8 156.8 V162 M593.4 159.6 L595.8 162.2 L598.2 159.6" fill="none" stroke="#3a96c7" stroke-width="1.3" stroke-linecap="round" stroke-linejoin="round" /><path d="M621.00 152.55 L624.20 155.85 L627.40 152.55" fill="none" stroke="#262626" stroke-width="1.5" stroke-linecap="round" stroke-linejoin="round" /><path d="M474.6 176 L481.6 183.6 L474.6 189 L467.2 181.6 Z" fill="#fff" stroke="#3b3b3b" stroke-width="1.3" stroke-linecap="round" stroke-linejoin="round" /><path d="M471.6 178.6 Q471 174.8 474.2 175.4 Q475.8 176 475.6 178" fill="none" stroke="#3b3b3b" stroke-width="1.2" stroke-linecap="round" stroke-linejoin="round" /><path d="M481.8 181.4 V187.6" fill="none" stroke="#3a96c7" stroke-width="1.6" stroke-linecap="round" stroke-linejoin="round" /><rect x="465.6" y="190.9" width="20.2" height="5" fill="#fff" stroke="#777" stroke-width="1"/><path d="M495.80 183.35 L499.00 186.65 L502.20 183.35" fill="none" stroke="#262626" stroke-width="1.5" stroke-linecap="round" stroke-linejoin="round" /><path d="M515 176.4 H533.2 M515 176.4 V193.6 M533.2 176.4 V193.6 M524.1 176.4 V193.6 M515 185 H533.2" fill="none" stroke="#8a8a8a" stroke-width="1" stroke-linecap="round" stroke-linejoin="round" stroke-dasharray="1.2 1.2"/><path d="M514.6 193.7 H533.6" fill="none" stroke="#333" stroke-width="1.5" stroke-linecap="round" stroke-linejoin="round" /><path d="M544.60 183.35 L547.80 186.65 L551.00 183.35" fill="none" stroke="#262626" stroke-width="1.5" stroke-linecap="round" stroke-linejoin="round" /><rect x="559" y="170" width="1" height="26" fill="#dcdcdc"/><rect x="593" y="170" width="1" height="26" fill="#dcdcdc"/><text x="568.2" y="185" font-family="'Liberation Sans',sans-serif" font-size="10.2" font-weight="400" fill="#3a96c7"  >A</text><text x="568.4" y="193.6" font-family="'Liberation Sans',sans-serif" font-size="10.2" font-weight="400" fill="#444"  >Z</text><path d="M581.6 176 V193.8 M578.4 190.4 L581.6 193.9 L584.8 190.4" fill="none" stroke="#3b3b3b" stroke-width="1.2" stroke-linecap="round" stroke-linejoin="round" /><path d="M611.6 178.4 H609.2 Q605 178.4 605 182.2 Q605 186 609.2 186 H611.6 Z" fill="#444"/><path d="M611 178.4 V192.2 M614.6 178.4 V192.2 M609 178.4 H616.2" fill="none" stroke="#444" stroke-width="1.3" stroke-linecap="round" stroke-linejoin="round" /><path d="M697.2 149 L709.8 118.4 L720.4 144 M701.6 138.4 H717.6" fill="none" stroke="#3c3c3c" stroke-width="2.2" stroke-linecap="round" stroke-linejoin="round" /><path d="M734.6 128.4 Q736.4 129.6 735.2 131.6 L722.2 146.8 L719.4 144.6 L732 129 Q733.4 127.6 734.6 128.4 Z" fill="#fff" stroke="#444" stroke-width="1.2" stroke-linejoin="round"/><path d="M719.2 144.4 L722.4 147 Q720.6 153.6 712.4 154.4 Q708.6 154.6 705.8 152.6 Q711.2 152 712.6 147.6 Q714.6 143 719.2 144.4 Z" fill="#4e9fe2" stroke="#2e7fcd" stroke-width="0.8"/><path d="M710.40 186.90 L713.80 190.30 L717.20 186.90" fill="none" stroke="#262626" stroke-width="1.5" stroke-linecap="round" stroke-linejoin="round" /><circle cx="786" cy="126.4" r="13.6" fill="#fafafa" stroke="#444" stroke-width="1.6"/><path d="M776.2 136.6 L761.8 151" fill="none" stroke="#444" stroke-width="1.7" stroke-linecap="round" stroke-linejoin="round" /><path d="M777.20 185.00 L780.60 188.40 L784.00 185.00" fill="none" stroke="#262626" stroke-width="1.5" stroke-linecap="round" stroke-linejoin="round" /><rect x="842.4" y="113.4" width="14" height="28.4" rx="7" fill="#69b3ee" stroke="#1b6fc4" stroke-width="1.9"/><path d="M837.2 133.6 Q837.2 146 849.4 146 Q861.4 146 861.4 133.6 M849.4 146.2 V153.6" fill="none" stroke="#444" stroke-width="1.6" stroke-linecap="round" stroke-linejoin="round" /><path d="M929.6 114.9 H915.3 V151.4 H942.6 V135.2" fill="none" stroke="#2f8ab8" stroke-width="1.6" stroke-linecap="round" stroke-linejoin="round" /><g transform="translate(929.2 134.3) rotate(45)"><rect x="-9.1" y="-3.2" width="18" height="6.4" rx="1.6" fill="#eaf6fd" stroke="#2f8ab8" stroke-width="1.3"/><rect x="-6.4" y="-1" width="12.6" height="2" rx="1" fill="#a9d9f5" stroke="#2f8ab8" stroke-width="0.9"/><rect x="-10.3" y="-19" width="19.2" height="8.4" fill="#f4fbff" stroke="#2f8ab8" stroke-width="1.2"/><rect x="-10.3" y="-14.6" width="19.2" height="4" fill="#2a82b8"/><path d="M-3.8 -20.2 H3.6 L4.6 -25.5 H-5.25 Z" fill="#f4fbff" stroke="#2f8ab8" stroke-width="1.3" stroke-linejoin="round"/></g><path d="M925.50 187.10 L928.90 190.50 L932.30 187.10" fill="none" stroke="#262626" stroke-width="1.5" stroke-linecap="round" stroke-linejoin="round" /><path d="M1015.4 115.2 Q1017.6 113.2 1019.8 114.6 Q1021.8 116 1020.6 118.6 L1001.2 147.4 L991 153.2 L993.4 141.8 Z" fill="#fff" stroke="#185abd" stroke-width="1.8" stroke-linejoin="round"/><path d="M1012.6 119 L1018 122.4" stroke="#185abd" stroke-width="1.6" fill="none"/><path d="M991 153.2 L992.4 146.6 L996.6 150 Z" fill="#185abd"/><path d="M1018.6 127 H1029.6" stroke="#185abd" stroke-width="5.2" stroke-linecap="round"/><path d="M1012 136.6 H1023.4" stroke="#185abd" stroke-width="5.2" stroke-linecap="round"/><path d="M1005.4 146.2 H1016.4" stroke="#185abd" stroke-width="5.2" stroke-linecap="round"/><path d="M1066 145.6 V118.9 H1100.4" fill="none" stroke="#3f3f3f" stroke-width="1.5" stroke-linecap="round" stroke-linejoin="round" /><rect x="1070.4" y="123" width="33" height="25" fill="#fff" stroke="#3f3f3f" stroke-width="1.5"/><rect x="1073.6" y="126.2" width="26.6" height="18.8" fill="#fff" stroke="#8a8a8a" stroke-width="1.2"/><circle cx="1090.6" cy="139" r="8.6" fill="#fff" stroke="#2e86b8" stroke-width="1.5"/><path d="M1096.8 145.4 L1104.8 153.8" fill="none" stroke="#2e86b8" stroke-width="1.7" stroke-linecap="round" stroke-linejoin="round" /><path d="M1333.4 205.4 L1339.3 211.6 L1345.2 205.4" fill="none" stroke="#262626" stroke-width="1.5" stroke-linecap="round" stroke-linejoin="round" /></svg>
<svg style="position:absolute;left:0;top:0" width="1366" height="768" viewBox="0 0 1366 768"><path d="M1353.6 237 L1357.6 231.4 L1361.6 237 Z" fill="#5f5f5f"/><rect x="1353.6" y="243.4" width="8" height="16" rx="3.6" fill="#6b6b6b"/><path d="M1353.6 679.6 L1357.6 685.2 L1361.6 679.6 Z" fill="#5f5f5f"/><circle cx="1367.5" cy="362.5" r="35.2" fill="none" stroke="#f4ee3a" stroke-width="3.2"/><rect x="1364.2" y="361.4" width="1.8" height="17.6" fill="#161616"/><path d="M239.4 699.6 Q235.6 697.4 230.8 698 V711.8 Q235.6 711.2 239.4 713.2 V699.6 Q243 697.4 247.4 698 V704.6" fill="none" stroke="#333" stroke-width="1.3" stroke-linecap="round" stroke-linejoin="round" /><path d="M241.4 706.8 L247.8 713.6 M247.8 706.8 L241.4 713.6" fill="none" stroke="#333" stroke-width="1.3" stroke-linecap="round" stroke-linejoin="round" /><circle cx="430.4" cy="699" r="1.9" fill="none" stroke="#333" stroke-width="1.2"/><path d="M422.2 700.6 L428.4 703 H432.4 L438.6 700.6 M428.4 703 L427.8 707.6 L424.6 713.4 M432.4 703 L432.8 706 M427.8 707.6 L430.2 705.8" fill="none" stroke="#333" stroke-width="1.3" stroke-linecap="round" stroke-linejoin="round" /><path d="M432.6 707 L439.2 713.8 M439.2 707 L432.6 713.8" fill="none" stroke="#333" stroke-width="1.3" stroke-linecap="round" stroke-linejoin="round" /><path d="M930.8 700 V696.4 H934.4 M946 696.4 H949.6 V700 M949.6 710.4 V714 H946 M934.4 714 H930.8 V710.4" fill="none" stroke="#333" stroke-width="1.3" stroke-linecap="round" stroke-linejoin="round" /><path d="M935 699.2 H941.6 L945.2 702.8 V711.6 H935 Z M941.4 699.4 V703 H945" fill="none" stroke="#333" stroke-width="1.2" stroke-linecap="round" stroke-linejoin="round" /><path d="M1024 699.4 Q1020.6 697.4 1015.8 698 V711 Q1020.6 710.4 1024 712.2 Q1027.4 710.4 1032.2 711 V698 Q1027.4 697.4 1024 699.4 V712" fill="none" stroke="#333" stroke-width="1.3" stroke-linecap="round" stroke-linejoin="round" /><path d="M1018 701.2 H1021.8 M1018 704 H1021.8 M1018 706.8 H1021.8 M1026.2 701.2 H1030 M1026.2 704 H1030 M1026.2 706.8 H1030" fill="none" stroke="#333" stroke-width="1" stroke-linecap="round" stroke-linejoin="round" /><rect x="1062.4" y="697" width="12.8" height="17" fill="#fafafa" stroke="#2a2a2a" stroke-width="1.6"/><path d="M1065.4 700.4 H1072.2 M1065.4 703.2 H1072.2 M1065.4 706 H1072.2 M1065.4 708.8 H1072.2 M1065.4 711.4 H1072.2" fill="none" stroke="#2a2a2a" stroke-width="1.1" stroke-linecap="round" stroke-linejoin="round" /><path d="M1114 712.2 H1106 V697.8 H1120.6 V703" fill="none" stroke="#333" stroke-width="1.3" stroke-linecap="round" stroke-linejoin="round" /><path d="M1108.4 700.8 H1118.2 M1108.4 703.6 H1114.6 M1108.4 706.4 H1112.6" fill="none" stroke="#333" stroke-width="1" stroke-linecap="round" stroke-linejoin="round" /><circle cx="1118.6" cy="709" r="5.2" fill="#f3f3f3" stroke="#333" stroke-width="1.2"/><path d="M1113.4 709 H1123.8 M1118.6 703.8 V714.2 M1118.6 703.8 Q1115 709 1118.6 714.2 M1118.6 703.8 Q1122.2 709 1118.6 714.2" fill="none" stroke="#333" stroke-width="0.9" stroke-linecap="round" stroke-linejoin="round" /><path d="M1143 705.7 H1152.4" fill="none" stroke="#333" stroke-width="1.2" stroke-linecap="round" stroke-linejoin="round" /><rect x="1158" y="705.2" width="135.4" height="1" fill="#6a6a6a"/><rect x="1223" y="698.2" width="5.4" height="14.6" rx="1" fill="#666"/><path d="M1299.4 705.7 H1308.6 M1304 701.2 V710.2" fill="none" stroke="#333" stroke-width="1.2" stroke-linecap="round" stroke-linejoin="round" /><defs><linearGradient id="wn" x1="0" y1="0" x2="1" y2="1"><stop offset="0" stop-color="#6fd6fb"/><stop offset="1" stop-color="#1e9eea"/></linearGradient><linearGradient id="edg" x1="0" y1="0" x2="1" y2="1"><stop offset="0" stop-color="#2a7bd6"/><stop offset="0.6" stop-color="#1fa3c9"/><stop offset="1" stop-color="#5fd66b"/></linearGradient><linearGradient id="ffx" x1="0.5" y1="0" x2="0.5" y2="1"><stop offset="0" stop-color="#ffd43a"/><stop offset="0.5" stop-color="#ff8a16"/><stop offset="1" stop-color="#e7284e"/></linearGradient><linearGradient id="ml" x1="0" y1="0" x2="0" y2="1"><stop offset="0" stop-color="#3aa5ea"/><stop offset="1" stop-color="#1668b8"/></linearGradient></defs><rect x="322.2" y="732.6" width="11.2" height="11.2" rx="0.8" fill="url(#wn)"/><rect x="334.2" y="732.6" width="11.2" height="11.2" rx="0.8" fill="url(#wn)"/><rect x="322.2" y="744.6" width="11.2" height="11.2" rx="0.8" fill="url(#wn)"/><rect x="334.2" y="744.6" width="11.2" height="11.2" rx="0.8" fill="url(#wn)"/><rect x="360" y="728" width="109" height="31.6" rx="15.8" fill="#263a48"/><circle cx="389.6" cy="741.4" r="4.6" fill="none" stroke="#fff" stroke-width="1.6"/><path d="M386.2 744.8 L381.6 749.6" fill="none" stroke="#fff" stroke-width="1.8" stroke-linecap="round" stroke-linejoin="round" /><rect x="481.6" y="739" width="17.4" height="15.4" rx="1.5" fill="#8c8f93"/><rect x="488.4" y="732.8" width="18" height="16.2" rx="1.5" fill="#f2f2f2" stroke="#c9c9c9" stroke-width="0.6"/><rect x="525.8" y="732.8" width="24.4" height="21.6" rx="2.4" fill="#1d6fd0"/><rect x="528.6" y="735.2" width="8.8" height="16.8" rx="1" fill="#fdfdfd"/><rect x="539.4" y="735.2" width="8.4" height="7.6" rx="1" fill="#8ed2fb"/><rect x="539.4" y="744.4" width="8.4" height="7.6" rx="1" fill="#3fa8ef"/><path d="M581.6 732.4 A11.6 11.6 0 1 1 575.4 753.8 L570 755.6 L571.4 750 A11.6 11.6 0 0 1 581.6 732.4 Z" fill="#7b75d2"/><circle cx="581.6" cy="744" r="8.2" fill="#9b96e6"/><rect x="576.4" y="740.4" width="7.6" height="7" rx="1.4" fill="#fff"/><path d="M584.6 743 L588 740.8 V747.2 L584.6 745 Z" fill="#fff"/><circle cx="625.8" cy="743.6" r="12.2" fill="url(#edg)"/><path d="M616 748 Q616.6 739.6 625.6 739.2 Q633.4 739.4 634 745.6 Q630.4 742.8 626 744 Q621.4 745.4 622.6 750.6 Q624 754.4 628.6 755.6 Q620.6 756.6 616 748 Z" fill="#15497f" opacity="0.85"/><path d="M625.8 731.4 A12.2 12.2 0 0 1 638 743.6 Q637.8 748.8 632.6 749.4 Q629 749.2 629.4 746.8 Q631 742 625.6 739.2 Q618.4 738.6 614.4 745.6 A12.2 12.2 0 0 1 625.8 731.4 Z" fill="#43c3d6" opacity="0.9"/><rect x="622.6" y="760.6" width="6.4" height="2.4" rx="1.2" fill="#8e979e"/><path d="M658 736.4 Q658 734.2 660.2 734.2 H666 L668.6 736.6 H680.6 Q682.8 736.6 682.8 738.8 V752 H658 Z" fill="#f7b928"/><rect x="658" y="738.8" width="24.8" height="15.6" rx="1.6" fill="#fdd24a"/><path d="M663.6 754.4 V748.6 Q663.6 747 665.2 747 H675.6 Q677.2 747 677.2 748.6 V754.4 Z" fill="#2f7fd3"/><rect x="667.2" y="760.6" width="6.4" height="2.4" rx="1.2" fill="#8e979e"/><path d="M716.6 731.6 L708 743.4 L713.4 744.6 L709 755.6 L719.6 742.2 L713.8 741 Z" fill="#38a8f0"/><path d="M716.6 731.6 L711.6 741.6 L713.8 741 Z M709 755.6 L714.6 744.8 L713.4 744.6 Z" fill="#9fdcff"/><path d="M745.6 740.4 L758 732.8 L770.4 740.4 V753.6 H745.6 Z" fill="#1f6fc2"/><path d="M745.6 741 L758 748.8 L770.4 741 V754 Q770.4 754.6 769.8 754.6 H746.2 Q745.6 754.6 745.6 754 Z" fill="url(#ml)"/><path d="M746 741.2 L758 749.2 L770 741.2 L770 742.6 L758 750.8 L746 742.6 Z" fill="#7fd0ff"/><rect x="790" y="731.8" width="24.4" height="24" rx="1" fill="#1561f0"/><path d="M798.2 737.2 L801.8000000000001 739.6 L798.2 742.0 L794.6 739.6 Z" fill="#fff"/><path d="M806.2 737.2 L809.8000000000001 739.6 L806.2 742.0 L802.6 739.6 Z" fill="#fff"/><path d="M798.2 742.8000000000001 L801.8000000000001 745.2 L798.2 747.6 L794.6 745.2 Z" fill="#fff"/><path d="M806.2 742.8000000000001 L809.8000000000001 745.2 L806.2 747.6 L802.6 745.2 Z" fill="#fff"/><path d="M802.2 747.8 L805.6 750 L802.2 752.2 L798.8 750 Z" fill="#fff"/><circle cx="846" cy="744.4" r="11.8" fill="url(#ffx)"/><path d="M848.6 730.2 Q852.6 733 853.6 738 Q856.6 740 857.6 744 Q856 741 853.4 741 Q849 735.6 848.6 730.2 Z" fill="#ffbd2e"/><circle cx="845.6" cy="744.6" r="6" fill="#8a3fd6"/><path d="M839.8 743 Q841.6 739.4 845.8 738.8 Q843.8 741 845 743 Q847.4 743.6 849.4 742.4 Q849 746.4 845 747 Q841 747 839.8 743 Z" fill="#ffa436"/><circle cx="892" cy="743.4" r="11.2" fill="#e8603c"/><path d="M892 732.2 A11.2 11.2 0 0 1 903.2 743.4 H892 Z" fill="#ff8f6b"/><path d="M892 754.6 A11.2 11.2 0 0 0 903.2 743.4 H892 Z" fill="#d04525"/><rect x="877.6" y="736.6" width="13.8" height="13.8" rx="1.4" fill="#c43e1c"/><text x="880.6" y="748.2" font-family="'Liberation Sans',sans-serif" font-size="11.5" font-weight="700" fill="#fff" >P</text><rect x="886.8" y="760.6" width="6.4" height="2.4" rx="1.2" fill="#8e979e"/><rect x="927.4" y="732.6" width="18.8" height="21.8" rx="1.6" fill="#1f9c58"/><rect x="936.8" y="732.6" width="9.4" height="7.4" fill="#35c481"/><rect x="936.8" y="740" width="9.4" height="7.2" fill="#1a8a4c"/><rect x="927.4" y="740" width="9.4" height="7.2" fill="#107c41"/><rect x="927.4" y="747.2" width="18.8" height="7.2" rx="1.6" fill="#16683a"/><rect x="921.6" y="736.8" width="13.6" height="13.6" rx="1.4" fill="#107c41"/><text x="924.4" y="748.2" font-family="'Liberation Sans',sans-serif" font-size="11.5" font-weight="700" fill="#fff" >X</text><rect x="930.8" y="760.6" width="6.4" height="2.4" rx="1.2" fill="#8e979e"/><rect x="958" y="724.4" width="36" height="40" rx="4" fill="#2b3d4a"/><rect x="973.4" y="732.6" width="18" height="21.8" rx="1.6" fill="#2b7cd3"/><rect x="973.4" y="732.6" width="18" height="5.6" rx="1.6" fill="#41a5ee"/><rect x="973.4" y="743.4" width="18" height="5.6" fill="#185abd"/><rect x="973.4" y="749" width="18" height="5.4" rx="1.6" fill="#103f91"/><rect x="967.4" y="736.8" width="13.6" height="13.6" rx="1.4" fill="#1a50a8"/><text x="968.6" y="748.2" font-family="'Liberation Sans',sans-serif" font-size="11" font-weight="700" fill="#fff" textLength="11" lengthAdjust="spacingAndGlyphs">W</text><rect x="968" y="760.4" width="16" height="2.8" rx="1.4" fill="#4cb4f4"/><rect x="1002" y="724.4" width="37" height="40" rx="4" fill="#4a2a2e"/><circle cx="1021.4" cy="743" r="8.6" fill="none" stroke="#c9c2d6" stroke-width="1.6"/><circle cx="1021.4" cy="743" r="3" fill="#9fc3f0"/><rect x="1018.2" y="760.6" width="6.4" height="2.4" rx="1.2" fill="#f08a8a"/><path d="M1066.4 746.8 L1072.8 740.4 L1079.2 746.8" fill="none" stroke="#fff" stroke-width="1.5" stroke-linecap="round" stroke-linejoin="round" /><circle cx="1105" cy="744" r="6.8" fill="none" stroke="#fff" stroke-width="1.5"/><circle cx="1105" cy="744" r="2.6" fill="#fff"/><path d="M1130.6 742.6 A6.6 6.6 0 0 1 1142 739 M1142.4 735.6 V739.4 H1138.6 M1143 746 A6.6 6.6 0 0 1 1131.6 749.6 M1131 753 V749.2 H1134.8" fill="none" stroke="#fff" stroke-width="1.4" stroke-linecap="round" stroke-linejoin="round" /><circle cx="1141.4" cy="749" r="3.8" fill="#1f7fe5"/><path d="M1163 748.6 Q1159.6 748.6 1160 745.4 Q1160.4 742.8 1163.2 743 Q1164.6 738.8 1169 739.6 Q1172 740 1172.8 743 Q1176 743.2 1176 746 Q1176 748.6 1173 748.6 Z" fill="#cfd3d6"/><circle cx="1172.4" cy="748.6" r="4" fill="#e8343a"/><path d="M1170.8 747 L1174 750.2 M1174 747 L1170.8 750.2" fill="none" stroke="#fff" stroke-width="1" stroke-linecap="round" stroke-linejoin="round" /><path d="M1193.4 741.2 Q1201 734.6 1208.6 741.2 M1196 744.4 Q1201 740.2 1206 744.4 M1198.6 747.4 Q1201 745.4 1203.4 747.4" fill="none" stroke="#fff" stroke-width="1.5" stroke-linecap="round" stroke-linejoin="round" /><circle cx="1201" cy="750.2" r="1.3" fill="#fff"/><path d="M1217.2 741.8 H1220 L1224.4 738 V750.6 L1220 746.8 H1217.2 Z" fill="none" stroke="#fff" stroke-width="1.3" stroke-linecap="round" stroke-linejoin="round" /><path d="M1227 741.4 Q1229.2 744.4 1227 747.4" fill="none" stroke="#fff" stroke-width="1.2" stroke-linecap="round" stroke-linejoin="round" /><path d="M1229.6 739.2 Q1233.2 744.4 1229.6 749.6" fill="none" stroke="#8b949b" stroke-width="1.2" stroke-linecap="round" stroke-linejoin="round" /><rect x="1243.6" y="739.8" width="12.6" height="9" rx="1.8" fill="#fff" stroke="#fff" stroke-width="1"/><rect x="1257" y="742.4" width="1.8" height="3.8" rx="0.8" fill="#fff"/><path d="M1240.2 741.4 V747 M1238.2 742.6 H1242.2 V744.6 Q1242.2 746.4 1240.2 746.4 Q1238.2 746.4 1238.2 744.6 Z" fill="#fff" stroke="#fff" stroke-width="1" stroke-linecap="round" stroke-linejoin="round" /><circle cx="1338" cy="744" r="8" fill="#4cc2ff"/><text x="1334.6" y="748.2" font-family="'Liberation Sans',sans-serif" font-size="11.5" font-weight="400" fill="#10222e" >4</text></svg>
<div style="position:absolute;left:400.31px;top:736.70px;font-family:'Liberation Sans',sans-serif;font-size:15.6px;line-height:1;white-space:pre;color:#fff;letter-spacing:-0.350px;-webkit-text-stroke:0.3px #fff;">Search</div>
<div style="position:absolute;left:1279.38px;top:729.80px;font-family:'Liberation Sans',sans-serif;font-size:12.4px;line-height:1;white-space:pre;color:#fff;letter-spacing:-0.377px;">6:47 PM</div>
<div style="position:absolute;left:1275.46px;top:745.80px;font-family:'Liberation Sans',sans-serif;font-size:12.4px;line-height:1;white-space:pre;color:#fff;letter-spacing:-0.130px;">1/9/2023</div>
</body></html>
